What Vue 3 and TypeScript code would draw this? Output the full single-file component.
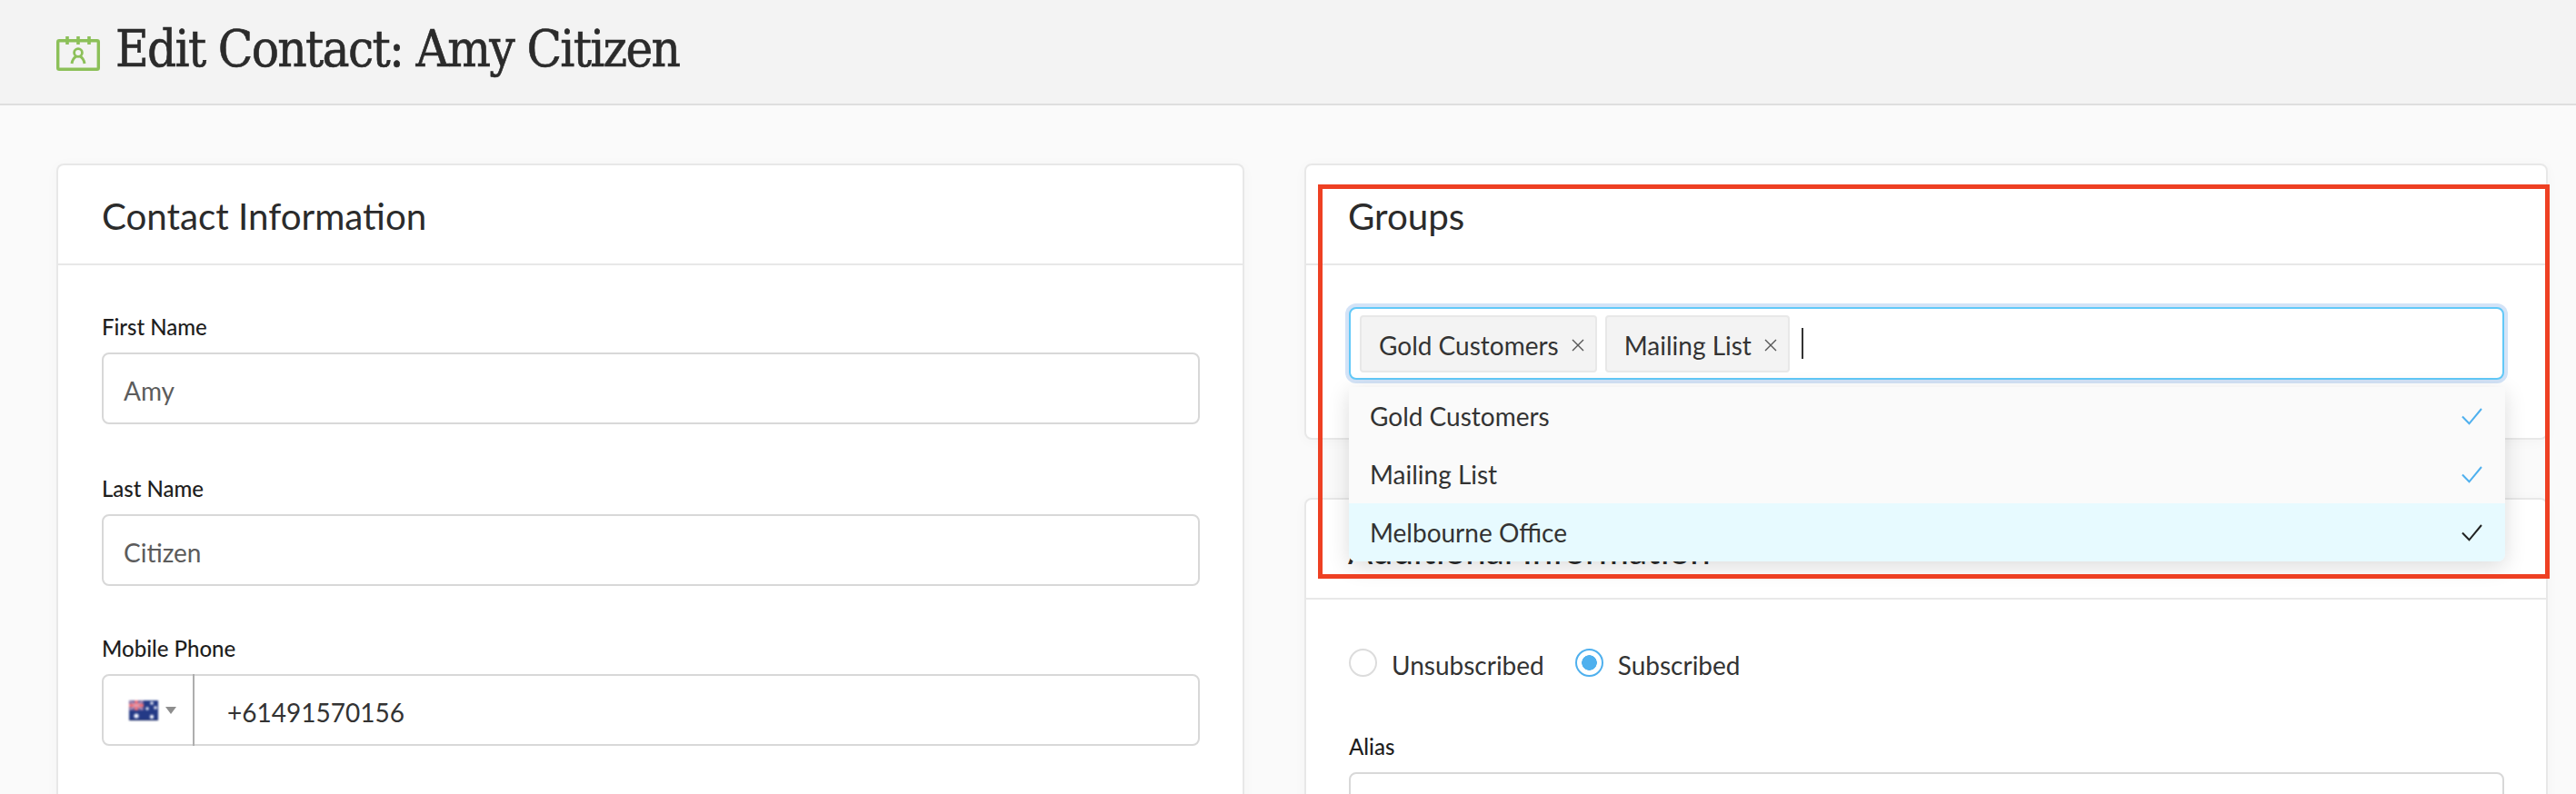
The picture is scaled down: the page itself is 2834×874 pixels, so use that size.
<script setup lang="ts">
const chips: string[] = ['Gold Customers', 'Mailing List']
const options = [
  { label: 'Gold Customers', active: false },
  { label: 'Mailing List', active: false },
  { label: 'Melbourne Office', active: true },
]
</script>

<template>
  <div class="page">
    <header class="topbar">
      <svg class="title-icon" width="48" height="38" viewBox="0 0 48 38" fill="none" stroke="#8cc059">
        <rect x="1.7" y="4.7" width="44.6" height="31.6" rx="1.5" stroke-width="3.4" />
        <path d="M12 0v9M24 0v9M36 0v9" stroke-width="3.6" />
        <circle cx="24" cy="18" r="4.4" stroke-width="2.8" />
        <path d="M17 30c.6-4.4 3.2-7 5-8M31 30c-.6-4.4-3.2-7-5-8" stroke-width="3" />
      </svg>
      <h1 class="title">Edit Contact: Amy Citizen</h1>
    </header>

    <main class="content">
      <section class="col">
        <div class="card card-left">
          <h2 class="card-title">Contact Information</h2>
          <div class="card-body">
            <div class="field">
              <label class="label">First Name</label>
              <div class="input">Amy</div>
            </div>
            <div class="field">
              <label class="label">Last Name</label>
              <div class="input">Citizen</div>
            </div>
            <div class="field">
              <label class="label">Mobile Phone</label>
              <div class="input phone">
                <div class="flag-box">
                  <svg class="flag" width="32" height="22" viewBox="0 0 32 22">
                    <rect width="32" height="22" fill="#243a86" />
                    <rect x="0" y="21" width="32" height="1" fill="#0e1c58" />
                    <rect x="0" y="0" width="16" height="11" fill="#6a5f9c" />
                    <path d="M0 5.5h16M8 0v11" stroke="#f4747c" stroke-width="3.6" />
                    <path d="M1 1l14 9M15 1L1 10" stroke="#d8a9c0" stroke-width="1.4" />
                    <g fill="#f4f6ff">
                      <circle cx="8" cy="17" r="2.6" />
                      <circle cx="25" cy="3" r="1.8" />
                      <circle cx="20" cy="9" r="1.7" />
                      <circle cx="29" cy="8" r="1.8" />
                      <circle cx="25" cy="18" r="2.2" />
                    </g>
                  </svg>
                  <span class="caret-down"></span>
                </div>
                <span class="phone-number">+61491570156</span>
              </div>
            </div>
          </div>
        </div>
      </section>

      <section class="col">
        <div class="card card-right groups">
          <h2 class="card-title">Groups</h2>
          <div class="card-body groups-body">
            <div class="select">
              <span v-for="chip in chips" :key="chip" class="chip">
                {{ chip }}
                <svg class="chip-x" width="14" height="14" viewBox="0 0 14 14" fill="none" stroke="#555" stroke-width="1.4">
                  <path d="M1 1l12 12M13 1L1 13" />
                </svg>
              </span>
              <span class="text-caret"></span>
            </div>
            <ul class="dropdown">
              <li v-for="opt in options" :key="opt.label" class="option" :class="{ active: opt.active }">
                <span>{{ opt.label }}</span>
                <svg class="check" width="23" height="19" viewBox="0 0 23 19" fill="none" stroke-width="2">
                  <path d="M1 9.5l7.5 7.8L22 1" />
                </svg>
              </li>
            </ul>
          </div>
        </div>

        <div class="card card-right additional">
          <h2 class="card-title">Additional Information</h2>
          <div class="card-body">
            <div class="radios">
              <span class="radio"></span>
              <span class="radio-text">Unsubscribed</span>
              <span class="radio checked"></span>
              <span class="radio-text">Subscribed</span>
            </div>
            <div class="field">
              <label class="label">Alias</label>
              <div class="input"></div>
            </div>
          </div>
        </div>
      </section>
    </main>

    <div class="annotation"></div>
  </div>
</template>

<style>
html,
body {
  margin: 0;
  height: 874px;
  overflow: hidden;
  background: #fafafa;
}
</style>

<style scoped>
.page {
  position: relative;
  width: 2834px;
  height: 874px;
  overflow: hidden;
  background: #fafafa;
  font-family: Lato, "Liberation Sans", sans-serif;
  color: #2b2b2b;
}

.topbar {
  display: flex;
  align-items: center;
  gap: 17px;
  height: 114px;
  padding-left: 62px;
  background: #f3f3f3;
  border-bottom: 2px solid #dedede;
  box-sizing: content-box;
}

.title-icon {
  margin-top: 3px;
  flex: none;
}

.title {
  margin: 0 0 6px;
  font-family: "DejaVu Serif Condensed", "DejaVu Serif", serif;
  font-size: 56px;
  font-weight: 400;
  line-height: 64px;
  letter-spacing: -1.7px;
  -webkit-text-stroke: 0.6px #2b2b2b;
  color: #2b2b2b;
}

.content {
  display: grid;
  grid-template-columns: 1307px 1368px;
  column-gap: 66px;
  padding: 64px 0 0 62px;
}

.card {
  background: #fff;
  border: 2px solid #e8e8e8;
  border-bottom-width: 0;
  border-radius: 8px;
  box-shadow: 0 2px 14px rgba(0, 0, 0, 0.03);
}

.card-left {
  min-height: 760px;
}

.groups {
  border-bottom-width: 2px;
  height: 304px;
  box-sizing: border-box;
  margin-bottom: 64px;
}

.card-title {
  margin: 0;
  height: 108px;
  border-bottom: 2px solid #e8e8e8;
  font-size: 40.3px;
  font-weight: 400;
  line-height: 112px;
  color: #2b2b2b;
}

.card-left .card-title,
.card-left .card-body {
  padding-left: 48px;
  padding-right: 47px;
}

.card-right .card-title {
  padding-left: 46px;
  padding-right: 46px;
}

.card-right .card-body {
  padding-left: 47px;
  padding-right: 46px;
}

.card-left .card-body {
  padding-top: 51px;
}

.groups-body {
  position: relative;
  padding-top: 46px;
}

.additional .card-body {
  padding-top: 52px;
}

.field {
  margin-bottom: 54px;
}

.field:nth-child(2) {
  margin-bottom: 52px;
}

.label {
  display: block;
  height: 34px;
  margin-bottom: 11px;
  font-size: 24px;
  font-weight: 500;
  line-height: 34px;
  color: #1e1e1e;
}

.input {
  height: 79px;
  box-sizing: border-box;
  padding-left: 22px;
  border: 2px solid #d8d8d8;
  border-radius: 8px;
  background: #fff;
  font-size: 28px;
  line-height: 80px;
  color: #5c5c5c;
}

.phone {
  display: flex;
  padding-left: 0;
  color: #333;
}

.flag-box {
  display: flex;
  align-items: center;
  width: 100px;
  box-sizing: border-box;
  padding-left: 28px;
  margin: -2px 0;
  border-right: 2px solid #aeaeae;
}

.flag {
  flex: none;
  filter: blur(1px);
}

.caret-down {
  width: 0;
  height: 0;
  margin-left: 8px;
  border-left: 6px solid transparent;
  border-right: 6px solid transparent;
  border-top: 8px solid #8e8e8e;
}

.phone-number {
  margin-left: 36px;
}

.select {
  display: flex;
  align-items: center;
  gap: 9px;
  height: 80px;
  box-sizing: border-box;
  padding: 0 9px 0 10px;
  border: 2px solid #62c9f8;
  border-radius: 8px;
  box-shadow: 0 0 0 4px #d3e3f7;
  background: #fff;
}

.chip {
  display: inline-flex;
  align-items: center;
  gap: 14px;
  height: 63px;
  box-sizing: border-box;
  padding: 4px 12px 0 19px;
  background: #f3f3f3;
  border: 2px solid #e8e8e8;
  border-radius: 4px;
  font-size: 28px;
  color: #333;
}

.chip-x {
  flex: none;
}

.text-caret {
  width: 2px;
  height: 34px;
  margin-left: 4px;
  background: #333;
}

.dropdown {
  position: absolute;
  z-index: 5;
  top: 134px;
  left: 47px;
  right: 45px;
  margin: 0;
  padding: 0;
  list-style: none;
  background: #fafafa;
  border-radius: 0 0 8px 8px;
  box-shadow: 0 6px 24px rgba(0, 0, 0, 0.14);
  overflow: hidden;
}

.option {
  display: flex;
  align-items: center;
  justify-content: space-between;
  height: 64px;
  padding: 0 25px 0 23px;
  font-size: 28px;
  color: #333;
}

.option.active {
  background: #e7faff;
}

.check {
  stroke: #4fb0ee;
}

.option.active .check {
  stroke: #222;
}

.radios {
  display: flex;
  align-items: center;
  height: 34px;
  margin-bottom: 59px;
  font-size: 28px;
  color: #333;
}

.radio {
  flex: none;
  width: 31px;
  height: 31px;
  box-sizing: border-box;
  border: 2px solid #dcdcdc;
  border-radius: 50%;
  background: #fff;
}

.radio.checked {
  border-color: #4fb0ee;
  background: radial-gradient(circle, #4fb0ee 0 8px, #fff 8.6px);
}

.radio-text {
  margin-left: 16px;
  margin-right: 34px;
  padding-top: 6px;
}

.annotation {
  position: absolute;
  z-index: 10;
  left: 1450px;
  top: 203px;
  width: 1355px;
  height: 434px;
  box-sizing: border-box;
  border: 5px solid #ee4023;
  pointer-events: none;
}
</style>
